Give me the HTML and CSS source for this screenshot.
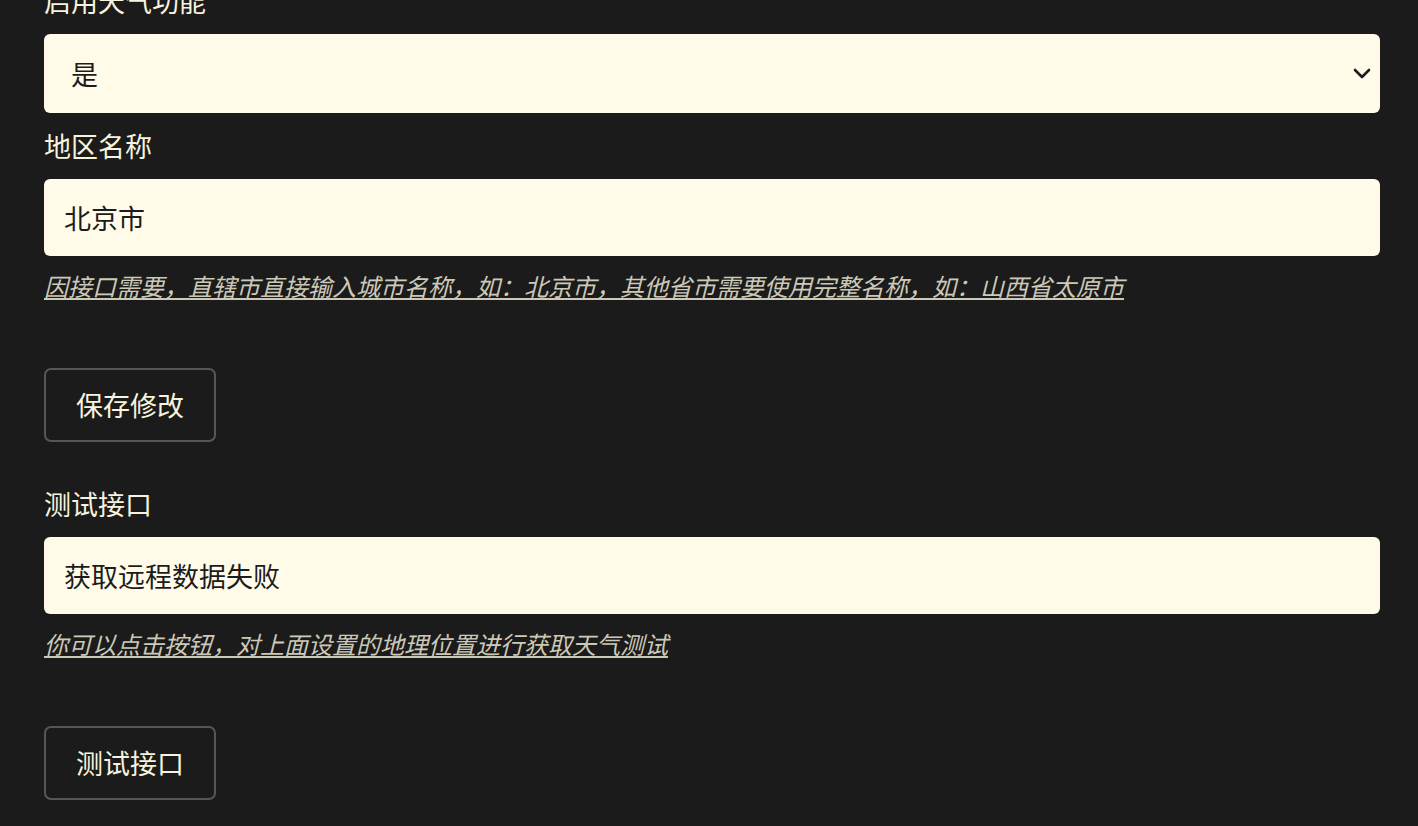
FILE: index.html
```html
<!DOCTYPE html>
<html lang="zh-CN">
<head>
<meta charset="utf-8">
<title>天气设置</title>
<link rel="stylesheet" href="styles.css">
</head>
<body>
<main class="page">
  <div class="field">
    <label class="label" for="enable">启用天气功能</label>
    <div class="select-wrap">
      <select id="enable" class="control select">
        <option>是</option>
        <option>否</option>
      </select>
      <svg class="chevron" width="18" height="12" viewBox="0 0 18 12" aria-hidden="true">
        <path d="M2 2 L9 9 L16 2" fill="none" stroke="#1b1b1b" stroke-width="2.6" stroke-linecap="round" stroke-linejoin="round"/>
      </svg>
    </div>
  </div>

  <div class="field field-next">
    <label class="label" for="city">地区名称</label>
    <input id="city" class="control input" type="text" value="北京市">
  </div>
  <p class="hint">因接口需要，直辖市直接输入城市名称，如：北京市，其他省市需要使用完整名称，如：山西省太原市</p>
  <div class="actions"><button class="btn" type="button">保存修改</button></div>

  <div class="field field-section">
    <label class="label" for="test">测试接口</label>
    <input id="test" class="control input" type="text" value="获取远程数据失败">
  </div>
  <p class="hint">你可以点击按钮，对上面设置的地理位置进行获取天气测试</p>
  <div class="actions"><button class="btn" type="button">测试接口</button></div>
</main>
</body>
</html>
```

FILE: styles.css
```css
html, body {
  margin: 0;
  padding: 0;
  background: #1b1b1b;
  overflow: hidden;
}

body {
  color: #f8f3de;
  font-family: "Noto Sans CJK SC", "Noto Sans", sans-serif;
}

.page {
  margin: -19px 38px 0 44px;
  display: flex;
  flex-direction: column;
}

.field {
  display: flex;
  flex-direction: column;
  gap: 13px;
}

.field-next {
  margin-top: 13px;
}

.field-section {
  margin-top: 42px;
}

.label {
  display: block;
  font-size: 27px;
  line-height: 40px;
  color: #f8f3de;
}

.control {
  box-sizing: border-box;
  width: 100%;
  border: none;
  border-radius: 6px;
  background: #fffbe8;
  color: #1c1c1c;
  font-family: "Noto Sans CJK SC", "Noto Sans", sans-serif;
  font-size: 27px;
  outline: none;
  margin: 0;
}

.select-wrap {
  position: relative;
}

.select {
  -webkit-appearance: none;
  appearance: none;
  height: 79px;
  padding: 0 0 0 27px;
}

.chevron {
  position: absolute;
  right: 9px;
  top: 34px;
  pointer-events: none;
}

.input {
  height: 77px;
  padding: 0 20px;
}

.hint {
  margin: 12px 0 0;
  font-size: 24px;
  line-height: 36px;
  font-style: italic;
  text-decoration: underline;
  color: #cdc9b8;
}

.actions {
  margin-top: 64px;
  display: flex;
}

.btn {
  box-sizing: border-box;
  height: 74px;
  padding: 0 30px;
  border: 2px solid #575757;
  border-radius: 7px;
  background: transparent;
  color: #f8f3de;
  font-family: "Noto Sans CJK SC", "Noto Sans", sans-serif;
  font-size: 27px;
  line-height: 40px;
}
```
